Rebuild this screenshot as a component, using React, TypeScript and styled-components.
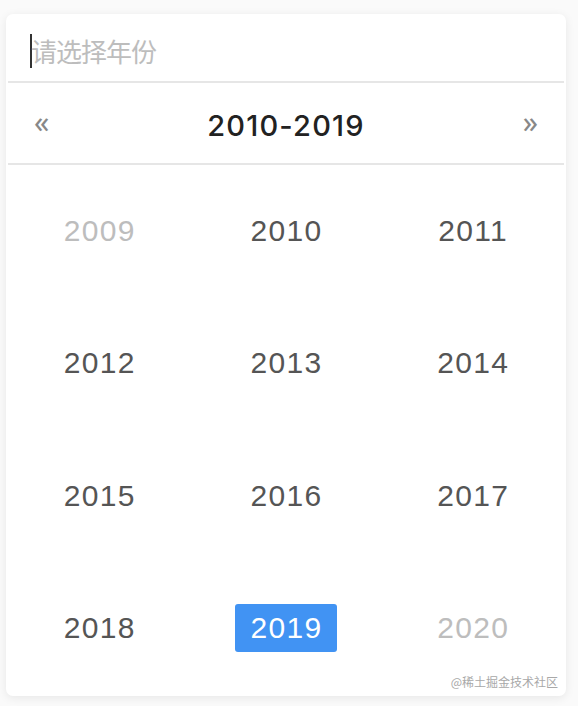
import styled, { createGlobalStyle } from "styled-components"

const GlobalStyle = createGlobalStyle`
 body {
    margin: 0;
    background: #ffffff;
    font-family: "Liberation Sans", "Noto Sans CJK SC", sans-serif;
 }
`

type YearCell = {
    year: number
    faded?: boolean
    selected?: boolean
}

const years: YearCell[] = [
    { year: 2009, faded: true },
    { year: 2010 },
    { year: 2011 },
    { year: 2012 },
    { year: 2013 },
    { year: 2014 },
    { year: 2015 },
    { year: 2016 },
    { year: 2017 },
    { year: 2018 },
    { year: 2019, selected: true },
    { year: 2020, faded: true },
]

const App: React.FC = () => {
    return (
        <Page>
            <GlobalStyle />
            <Card>
                <InputRow>
                    <Caret />
                    <Placeholder>请选择年份</Placeholder>
                </InputRow>
                <Header>
                    <Arrow>«</Arrow>
                    <Title>2010-2019</Title>
                    <Arrow>»</Arrow>
                </Header>
                <YearGrid>
                    {years.map(cell => (
                        <Cell key={cell.year}>
                            <YearLabel $faded={cell.faded} $selected={cell.selected}>
                                {cell.year}
                            </YearLabel>
                        </Cell>
                    ))}
                </YearGrid>
                <Watermark>@稀土掘金技术社区</Watermark>
            </Card>
        </Page>
    )
}

export default App

const Page = styled.div`
 width: 578px;
 height: 706px;
 padding: 14px 12px 10px 6px;
 box-sizing: border-box;
 background: #fafafa;
`

const Card = styled.div`
 position: relative;
 display: flex;
 flex-direction: column;
 height: 682px;
 background: #ffffff;
 border-radius: 7px;
 box-shadow: 0 2px 10px rgba(0, 0, 0, 0.08);
 overflow: hidden;
`

const InputRow = styled.div`
 display: flex;
 align-items: center;
 height: 67px;
 padding-left: 22px;
 border-bottom: 2px solid #e6e6e6;
 margin: 0 2px;
`

const Caret = styled.span`
 width: 2px;
 height: 34px;
 background: #333;
 margin-top: 6px;
`

const Placeholder = styled.span`
 font-family: "Noto Sans CJK SC", sans-serif;
 font-size: 26px;
 color: #bdbdbd;
 margin-top: 6px;
 margin-left: -1px;
 letter-spacing: -1px;
`

const Header = styled.div`
 display: flex;
 align-items: center;
 justify-content: space-between;
 height: 80px;
 padding: 0 26px 0 26px;
 border-bottom: 2px solid #e6e6e6;
 margin: 0 2px;
`

const Arrow = styled.span`
 font-family: "Noto Sans", sans-serif;
 font-size: 30px;
 color: #888;
 line-height: 1;
 margin-top: -2px;
`

const Title = styled.span`
 font-family: "Inter", sans-serif;
 font-size: 29px;
 font-weight: 500;
 letter-spacing: 1.2px;
 color: #222;
 margin-top: 4px;
`

const YearGrid = styled.div`
 flex: 1;
 display: grid;
 grid-template-columns: repeat(3, 1fr);
 grid-template-rows: repeat(4, 1fr);
 padding-top: 0;
 padding-bottom: 2px;
`

const Cell = styled.div`
 display: flex;
 align-items: center;
 justify-content: center;
`

const YearLabel = styled.span<{ $faded?: boolean; $selected?: boolean }>`
 display: flex;
 align-items: center;
 justify-content: center;
 width: 102px;
 height: 48px;
 border-radius: 3px;
 font-size: 30px;
 letter-spacing: 1.3px;
 padding-left: 1px;
 box-sizing: border-box;
 color: ${p => (p.$selected ? "#ffffff" : p.$faded ? "#bdbdbd" : "#555555")};
 background: ${p => (p.$selected ? "#4193f3" : "transparent")};
`

const Watermark = styled.span`
 position: absolute;
 right: 8px;
 bottom: 6px;
 font-family: "Noto Sans CJK SC", sans-serif;
 font-size: 12px;
 color: #a8a8a8;
`
